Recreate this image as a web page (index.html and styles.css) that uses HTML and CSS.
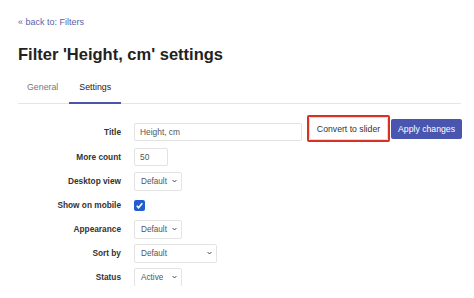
FILE: index.html
```html
<!DOCTYPE html>
<html>
<head>
<meta charset="utf-8">
<link rel="stylesheet" href="styles.css">
</head>
<body>
<div class="page">
  <a class="back" href="#">« back to: Filters</a>
  <h1 class="title">Filter 'Height, cm' settings</h1>
  <div class="tabs">
    <span class="tab">General</span>
    <span class="tab active">Settings</span>
  </div>
  <div class="form">
    <div class="label">Title</div>
    <div class="ctrl title-row">
      <div class="input input-title">Height, cm</div>
      <div class="highlight"><span class="btn btn-light">Convert to slider</span></div>
      <span class="btn btn-primary">Apply changes</span>
    </div>

    <div class="label">More count</div>
    <div class="ctrl"><div class="input input-count">50</div></div>

    <div class="label">Desktop view</div>
    <div class="ctrl"><div class="select sel-sm"><span>Default</span><svg class="chev" viewBox="0 0 8 5"><path d="M1 1l3 3 3-3" /></svg></div></div>

    <div class="label">Show on mobile</div>
    <div class="ctrl"><span class="check"><svg viewBox="0 0 12 12"><path d="M3 6.3l2 2.2 4-5" /></svg></span></div>

    <div class="label">Appearance</div>
    <div class="ctrl"><div class="select sel-sm"><span>Default</span><svg class="chev" viewBox="0 0 8 5"><path d="M1 1l3 3 3-3" /></svg></div></div>

    <div class="label">Sort by</div>
    <div class="ctrl"><div class="select sel-lg"><span>Default</span><svg class="chev" viewBox="0 0 8 5"><path d="M1 1l3 3 3-3" /></svg></div></div>

    <div class="label">Status</div>
    <div class="ctrl"><div class="select sel-sm"><span>Active</span><svg class="chev" viewBox="0 0 8 5"><path d="M1 1l3 3 3-3" /></svg></div></div>
  </div>
</div>
</body>
</html>
```

FILE: styles.css
```css
html, body {
  margin: 0;
  padding: 0;
  background: #fff;
}
body {
  font-family: "Liberation Sans", Arial, sans-serif;
  color: #222;
}
.page {
  padding: 16px 13px 0 18px;
}
.back {
  display: block;
  font-size: 9px;
  line-height: 12px;
  color: #5a5fa6;
  text-decoration: none;
}
.title {
  margin: 14px 0 0;
  font-size: 16.5px;
  line-height: 24px;
  font-weight: 700;
  color: #222;
}
.tabs {
  display: flex;
  margin-top: 9px;
  border-bottom: 1px solid #e6e6e6;
}
.tab {
  font-size: 8.8px;
  line-height: 12px;
  padding: 6px 10px 9px;
  color: #777;
  border-bottom: 2px solid transparent;
  margin-bottom: -1px;
}
.tab:first-child { padding-left: 9px; padding-right: 11px; }
.tab.active {
  color: #222;
  border-bottom-color: #4a55a8;
}
.form {
  display: grid;
  grid-template-columns: 103px 1fr;
  column-gap: 13px;
  row-gap: 6px;
  margin-top: 11px;
  align-items: center;
}
.label {
  text-align: right;
  font-size: 8.3px;
  font-weight: 700;
  color: #333;
}
.ctrl {
  display: flex;
  align-items: center;
  height: 18px;
}
.title-row {
  height: 27px;
  align-items: flex-start;
}
.form > .label:first-child {
  align-self: start;
  padding-top: 12px;
}
.input, .select {
  box-sizing: border-box;
  height: 18px;
  border: 1px solid #e3e3e3;
  border-radius: 2px;
  font-size: 8.4px;
  color: #555;
  display: flex;
  align-items: center;
  padding: 0 5px;
  background: #fff;
}
.input-title {
  width: 168px;
  margin-top: 8px;
}
.input-count { width: 34px; }
.highlight {
  box-sizing: border-box;
  margin-left: 5px;
  height: 27px;
  width: 83px;
  border: 2px solid #d93025;
  border-radius: 2px;
  display: flex;
  align-items: center;
  justify-content: center;
}
.btn {
  box-sizing: border-box;
  font-size: 8.7px;
  display: flex;
  align-items: center;
  justify-content: center;
  border-radius: 2px;
  white-space: nowrap;
}
.btn-light {
  width: 79px;
  height: 23px;
  border: 1px solid #ddd;
  color: #333;
  background: #fff;
}
.btn-primary {
  margin-top: 4px;
  margin-left: 1px;
  width: 71px;
  height: 20px;
  background: #4a55b0;
  color: #fff;
}
.select {
  justify-content: space-between;
  padding: 0 4px 0 6px;
  height: 19px;
  font-size: 8.2px;
}
.sel-sm { width: 48px; }
.sel-lg { width: 83px; }
.chev {
  width: 5px;
  height: 4px;
  flex: none;
  fill: none;
  stroke: #444;
  stroke-width: 1.6;
}
.check {
  width: 11px;
  height: 11px;
  background: #1f5fcf;
  border-radius: 2px;
  display: flex;
}
.check svg {
  width: 11px;
  height: 11px;
  fill: none;
  stroke: #fff;
  stroke-width: 1.8;
}
```
